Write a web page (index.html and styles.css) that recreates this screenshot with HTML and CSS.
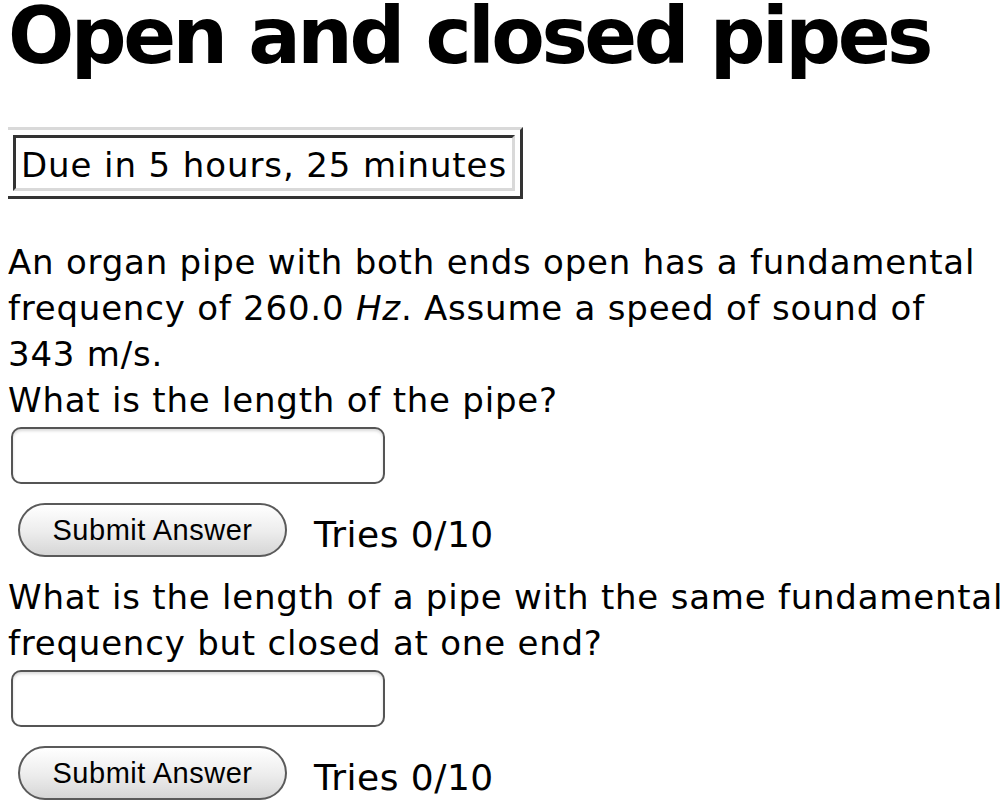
FILE: index.html
```html
<!DOCTYPE html>
<html>
<head>
<meta charset="utf-8">
<link rel="stylesheet" href="styles.css">
</head>
<body>
<h1 class="title">Open and closed pipes</h1>
<table class="due">
  <tr><td class="due-cell">Due in 5 hours, 25 minutes</td></tr>
</table>
<div class="problem">
  <p class="text">An organ pipe with both ends open has a fundamental frequency of 260.0 <i>Hz</i>. Assume a speed of sound of 343&nbsp;m/s.<br>What is the length of the pipe?</p>
  <input class="answer" type="text">
  <div class="submit-row">
    <button class="submit">Submit Answer</button>
    <span class="tries">Tries 0/10</span>
  </div>
  <p class="text">What is the length of a pipe with the same fundamental frequency but closed at one end?</p>
  <input class="answer" type="text">
  <div class="submit-row">
    <button class="submit">Submit Answer</button>
    <span class="tries">Tries 0/10</span>
  </div>
</div>
</body>
</html>
```
FILE: styles.css
```css
html, body {
  background: #fff;
}
body {
  margin: 0 0 0 8px;
  font-family: "DejaVu Sans", Verdana, sans-serif;
  color: #000;
  overflow: hidden;
}
.title {
  font-size: 78px;
  font-weight: bold;
  margin: 0;
  line-height: 72px;
  letter-spacing: -3.5px;
  white-space: nowrap;
}
.due {
  margin: 55px 0 0 -3px;
  border-collapse: separate;
  border-spacing: 5px;
  border-width: 3px;
  border-style: solid;
  border-color: #d9d9d9 #333 #333 #d9d9d9;
}
.due-cell {
  font-size: 34px;
  line-height: 45px;
  letter-spacing: 0.9px;
  padding: 5px 5px 0 5px;
  border-width: 3px;
  border-style: solid;
  border-color: #333 #d9d9d9 #d9d9d9 #333;
}
.problem {
  margin-top: 40px;
}
.text {
  font-size: 34px;
  line-height: 46px;
  letter-spacing: 0.78px;
  margin: 0;
}
.answer {
  display: block;
  box-sizing: border-box;
  width: 374px;
  height: 57px;
  margin: 4px 0 0 3px;
  border: 2px solid #555;
  border-radius: 10px;
  background: #fff;
  box-shadow: inset 0 2px 3px rgba(0, 0, 0, 0.15);
  font-size: 30px;
}
.submit-row {
  display: flex;
  align-items: center;
  margin: 19px 0 17px 10px;
}
.submit {
  box-sizing: border-box;
  width: 269px;
  height: 54px;
  border: 2px solid #5a5a5a;
  border-radius: 27px;
  background: linear-gradient(#ffffff, #ececec 55%, #d6d6d6);
  font-family: "Liberation Sans", Arial, sans-serif;
  font-size: 29px;
  letter-spacing: 0.5px;
  color: #000;
  padding: 0;
}
.tries {
  font-size: 36px;
  letter-spacing: 0.5px;
  margin: 8px 0 0 27px;
}
```
